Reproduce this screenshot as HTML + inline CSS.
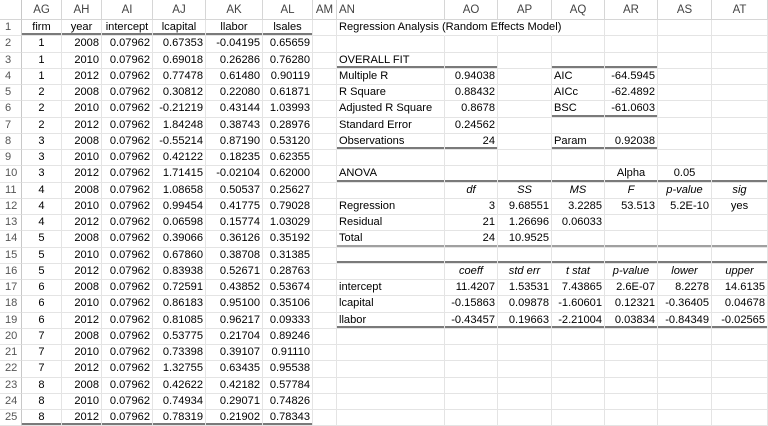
<!DOCTYPE html>
<html><head><meta charset="utf-8"><style>
*{margin:0;padding:0;box-sizing:border-box}
body{width:768px;height:425px;overflow:hidden;background:#fff;font-family:"Liberation Sans",sans-serif;font-size:11.1px;color:#000}
.r{display:flex;height:16.25px}
.h{height:20px;color:#444;font-size:11.5px}
.r>span{display:block;height:100%;border-right:1px solid #e4e4e4;border-bottom:1px solid #e4e4e4;white-space:nowrap;overflow:visible;padding:0 2px;line-height:15.5px;text-align:right}
.h>span{text-align:center;line-height:20px;border-color:#d6d6d6}
.r>span:nth-child(1){width:22px;text-align:left;padding-left:5px;color:#555;border-right-color:#c8c8c8}
.r>span:nth-child(2){width:40px;text-align:center}
.r>span:nth-child(3){width:40px}
.r>span:nth-child(4){width:51px}
.r>span:nth-child(5){width:53px}
.r>span:nth-child(6){width:57px}
.r>span:nth-child(7){width:50px}
.r>span:nth-child(8){width:24px}
.r>span:nth-child(9){width:108px;text-align:left}
.r>span:nth-child(10){width:53px}
.r>span:nth-child(11){width:54px}
.r>span:nth-child(12){width:53px}
.r>span:nth-child(13){width:53px}
.r>span:nth-child(14){width:54px}
.r>span:nth-child(15){width:56px}
.r>span.l{text-align:left}
.r>span.c{text-align:center}
.r>span.i{text-align:center;font-style:italic}
.r>span.b{box-shadow:inset 0 -2px #7a7a7a}
.r>span.t{box-shadow:inset 0 -2px #a0a0a0}
.r>span.n{border-right-color:transparent}
.r1>span:nth-child(n+2):nth-child(-n+7){text-align:center}
</style></head><body>
<div class="r h"><span></span><span>AG</span><span>AH</span><span>AI</span><span>AJ</span><span>AK</span><span>AL</span><span>AM</span><span>AN</span><span>AO</span><span>AP</span><span>AQ</span><span>AR</span><span>AS</span><span>AT</span></div>
<div class="r r1"><span>1</span><span class="b">firm</span><span class="b">year</span><span class="b">intercept</span><span class="b">lcapital</span><span class="b">llabor</span><span class="b">lsales</span><span></span><span class="n" style="position:relative;z-index:2">Regression Analysis (Random Effects Model)</span><span class="n"></span><span class="n"></span><span></span><span></span><span></span><span></span></div>
<div class="r"><span>2</span><span>1</span><span>2008</span><span>0.07962</span><span>0.67353</span><span>-0.04195</span><span>0.65659</span><span></span><span></span><span></span><span></span><span></span><span></span><span></span><span></span></div>
<div class="r"><span>3</span><span>1</span><span>2010</span><span>0.07962</span><span>0.69018</span><span>0.26286</span><span>0.76280</span><span></span><span class="b">OVERALL FIT</span><span class="b"></span><span></span><span class="b"></span><span class="b"></span><span></span><span></span></div>
<div class="r"><span>4</span><span>1</span><span>2012</span><span>0.07962</span><span>0.77478</span><span>0.61480</span><span>0.90119</span><span></span><span>Multiple R</span><span>0.94038</span><span></span><span class="l">AIC</span><span>-64.5945</span><span></span><span></span></div>
<div class="r"><span>5</span><span>2</span><span>2008</span><span>0.07962</span><span>0.30812</span><span>0.22080</span><span>0.61871</span><span></span><span>R Square</span><span>0.88432</span><span></span><span class="l">AICc</span><span>-62.4892</span><span></span><span></span></div>
<div class="r"><span>6</span><span>2</span><span>2010</span><span>0.07962</span><span>-0.21219</span><span>0.43144</span><span>1.03993</span><span></span><span>Adjusted R Square</span><span>0.8678</span><span></span><span class="l b">BSC</span><span class="b">-61.0603</span><span></span><span></span></div>
<div class="r"><span>7</span><span>2</span><span>2012</span><span>0.07962</span><span>1.84248</span><span>0.38743</span><span>0.28976</span><span></span><span>Standard Error</span><span>0.24562</span><span></span><span></span><span></span><span></span><span></span></div>
<div class="r"><span>8</span><span>3</span><span>2008</span><span>0.07962</span><span>-0.55214</span><span>0.87190</span><span>0.53120</span><span></span><span class="b">Observations</span><span class="b">24</span><span></span><span class="l b">Param</span><span class="b">0.92038</span><span></span><span></span></div>
<div class="r"><span>9</span><span>3</span><span>2010</span><span>0.07962</span><span>0.42122</span><span>0.18235</span><span>0.62355</span><span></span><span></span><span></span><span></span><span></span><span></span><span></span><span></span></div>
<div class="r"><span>10</span><span>3</span><span>2012</span><span>0.07962</span><span>1.71415</span><span>-0.02104</span><span>0.62000</span><span></span><span class="b">ANOVA</span><span class="b"></span><span class="b"></span><span class="b"></span><span class="b c">Alpha</span><span class="b c">0.05</span><span class="b"></span></div>
<div class="r"><span>11</span><span>4</span><span>2008</span><span>0.07962</span><span>1.08658</span><span>0.50537</span><span>0.25627</span><span></span><span></span><span class="i">df</span><span class="i">SS</span><span class="i">MS</span><span class="i">F</span><span class="i">p-value</span><span class="i">sig</span></div>
<div class="r"><span>12</span><span>4</span><span>2010</span><span>0.07962</span><span>0.99454</span><span>0.41775</span><span>0.79028</span><span></span><span>Regression</span><span>3</span><span>9.68551</span><span>3.2285</span><span>53.513</span><span>5.2E-10</span><span class="c">yes</span></div>
<div class="r"><span>13</span><span>4</span><span>2012</span><span>0.07962</span><span>0.06598</span><span>0.15774</span><span>1.03029</span><span></span><span>Residual</span><span>21</span><span>1.26696</span><span>0.06033</span><span></span><span></span><span></span></div>
<div class="r"><span>14</span><span>5</span><span>2008</span><span>0.07962</span><span>0.39066</span><span>0.36126</span><span>0.35192</span><span></span><span class="t">Total</span><span class="t">24</span><span class="t">10.9525</span><span class="t"></span><span class="t"></span><span class="t"></span><span class="t"></span></div>
<div class="r"><span>15</span><span>5</span><span>2010</span><span>0.07962</span><span>0.67860</span><span>0.38708</span><span>0.31385</span><span></span><span class="b"></span><span class="b"></span><span class="b"></span><span class="b"></span><span class="b"></span><span class="b"></span><span class="b"></span></div>
<div class="r"><span>16</span><span>5</span><span>2012</span><span>0.07962</span><span>0.83938</span><span>0.52671</span><span>0.28763</span><span></span><span></span><span class="i">coeff</span><span class="i">std err</span><span class="i">t stat</span><span class="i">p-value</span><span class="i">lower</span><span class="i">upper</span></div>
<div class="r"><span>17</span><span>6</span><span>2008</span><span>0.07962</span><span>0.72591</span><span>0.43852</span><span>0.53674</span><span></span><span>intercept</span><span>11.4207</span><span>1.53531</span><span>7.43865</span><span>2.6E-07</span><span>8.2278</span><span>14.6135</span></div>
<div class="r"><span>18</span><span>6</span><span>2010</span><span>0.07962</span><span>0.86183</span><span>0.95100</span><span>0.35106</span><span></span><span>lcapital</span><span>-0.15863</span><span>0.09878</span><span>-1.60601</span><span>0.12321</span><span>-0.36405</span><span>0.04678</span></div>
<div class="r"><span>19</span><span>6</span><span>2012</span><span>0.07962</span><span>0.81085</span><span>0.96217</span><span>0.09333</span><span></span><span class="b">llabor</span><span class="b">-0.43457</span><span class="b">0.19663</span><span class="b">-2.21004</span><span class="b">0.03834</span><span class="b">-0.84349</span><span class="b">-0.02565</span></div>
<div class="r"><span>20</span><span>7</span><span>2008</span><span>0.07962</span><span>0.53775</span><span>0.21704</span><span>0.89246</span><span></span><span></span><span></span><span></span><span></span><span></span><span></span><span></span></div>
<div class="r"><span>21</span><span>7</span><span>2010</span><span>0.07962</span><span>0.73398</span><span>0.39107</span><span>0.91110</span><span></span><span></span><span></span><span></span><span></span><span></span><span></span><span></span></div>
<div class="r"><span>22</span><span>7</span><span>2012</span><span>0.07962</span><span>1.32755</span><span>0.63435</span><span>0.95538</span><span></span><span></span><span></span><span></span><span></span><span></span><span></span><span></span></div>
<div class="r"><span>23</span><span>8</span><span>2008</span><span>0.07962</span><span>0.42622</span><span>0.42182</span><span>0.57784</span><span></span><span></span><span></span><span></span><span></span><span></span><span></span><span></span></div>
<div class="r"><span>24</span><span>8</span><span>2010</span><span>0.07962</span><span>0.74934</span><span>0.29071</span><span>0.74826</span><span></span><span></span><span></span><span></span><span></span><span></span><span></span><span></span></div>
<div class="r"><span>25</span><span class="b">8</span><span class="b">2012</span><span class="b">0.07962</span><span class="b">0.78319</span><span class="b">0.21902</span><span class="b">0.78343</span><span></span><span></span><span></span><span></span><span></span><span></span><span></span><span></span></div>
</body></html>
